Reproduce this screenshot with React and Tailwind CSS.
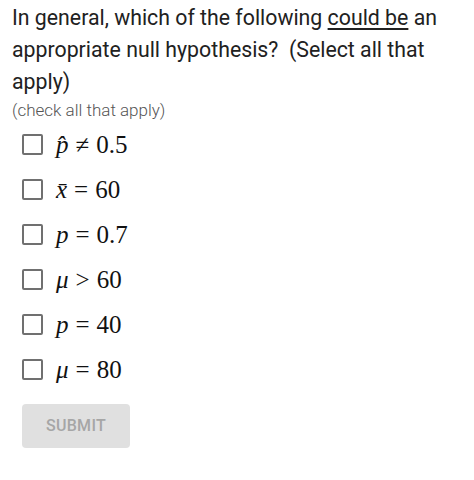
import React, { useState } from 'react';

const mathFont = { fontFamily: '"Liberation Serif", "DejaVu Serif", serif' };

const Option = ({ children, checked, onToggle }) => (
  <label className="flex items-center gap-[13px] h-[45px] cursor-pointer">
    <input type="checkbox" className="sr-only" checked={checked} onChange={onToggle} />
    <span className={`w-[21px] h-[21px] border-2 border-[#707070] rounded-[2px] ${checked ? 'bg-[#707070]' : 'bg-white'}`} />
    <span className="text-[25px] text-[#111] leading-none flex items-baseline" style={mathFont}>{children}</span>
  </label>
);

const Op = ({ children }) => <span className="mx-[7px]">{children}</span>;

const App = () => {
  const [checked, setChecked] = useState([false, false, false, false, false, false]);

  const toggle = (i) => setChecked(prev => prev.map((c, j) => (j === i ? !c : c)));

  const options = [
    <><span className="italic">p&#770;</span><Op>≠</Op>0.5</>,
    <><span className="italic">x&#772;</span><Op>=</Op>60</>,
    <><span className="italic">p</span><Op>=</Op>0.7</>,
    <><span className="italic">μ</span><Op>&gt;</Op>60</>,
    <><span className="italic">p</span><Op>=</Op>40</>,
    <><span className="italic">μ</span><Op>=</Op>80</>,
  ];

  return (
    <main className="w-[474px] h-[480px] bg-white px-3 pt-[2px]" style={{ fontFamily: 'Roboto, "Noto Sans", sans-serif' }}>
      <h1 className="text-[21.3px] leading-[32px] text-[#212121] font-normal">
        In general, which of the following <span className="underline underline-offset-[3px]">could be</span> an appropriate null hypothesis?&nbsp; (Select all that apply)
      </h1>
      <p className="text-[17px] leading-[22px] text-[#555] font-light mt-[1px]">(check all that apply)</p>
      <div className="pl-[10px] mt-[1px] flex flex-col">
        {options.map((o, i) => (
          <Option key={i} checked={checked[i]} onToggle={() => toggle(i)}>{o}</Option>
        ))}
      </div>
      <button
        type="button"
        disabled
        className="ml-[10px] mt-[12px] w-[108px] h-[44px] rounded bg-[#e0e0e0] text-[#a6a6a6] text-[16px] font-medium tracking-[0.3px]"
      >
        SUBMIT
      </button>
    </main>
  );
};

export default App;
